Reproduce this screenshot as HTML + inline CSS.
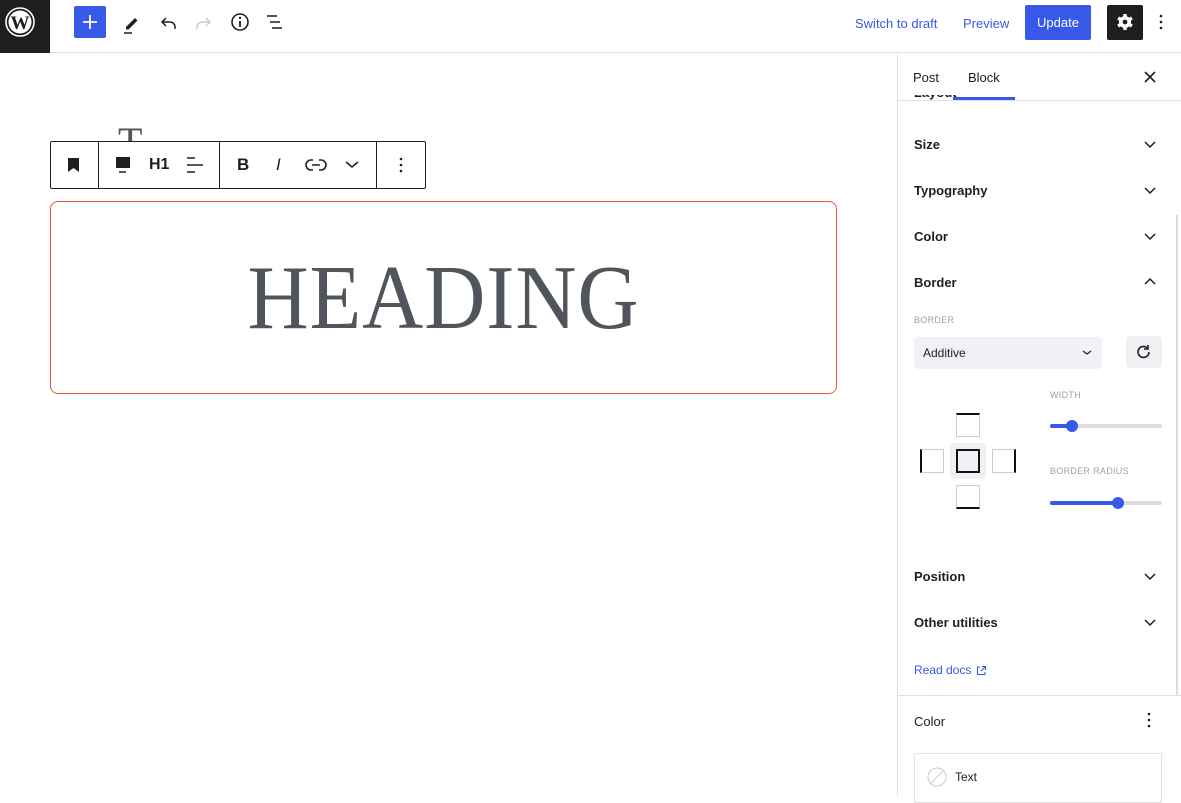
<!DOCTYPE html>
<html><head><meta charset="utf-8"><style>
*{box-sizing:border-box;margin:0;padding:0}
body{width:1181px;height:796px;overflow:hidden;background:#fff;font-family:"Liberation Sans",sans-serif;color:#1e1e1e;position:relative}
.abs{position:absolute}
.top{left:0;top:0;width:1181px;height:53px;border-bottom:1px solid #e0e0e0}
.side{left:897px;top:53px;width:284px;height:743px;border-left:1px solid #e0e0e0}
.row{position:absolute;left:914px;font-size:13px;font-weight:bold;color:#1e1e1e}
.chev{position:absolute;left:1143px;width:14px;height:10px}
.lbl{position:absolute;font-size:9px;color:#a0a0a8;letter-spacing:.3px}
</style></head><body>
<div class="abs top"></div>
<div class="abs" style="left:0;top:0;width:50px;height:53px;background:#1e1e1e"></div>
<svg class="abs" style="left:5px;top:7px" width="30" height="30" viewBox="0 0 30 30"><circle cx="15" cy="15" r="14" fill="none" stroke="#fff" stroke-width="1.6"/><circle cx="15" cy="15" r="11.5" fill="#fff"/><text x="15" y="22" text-anchor="middle" font-family="Liberation Serif" font-weight="bold" font-size="19" fill="#1e1e1e">W</text></svg>
<div class="abs" style="left:74px;top:6px;width:32px;height:32px;background:#3858e9;border-radius:2px"></div>
<svg class="abs" style="left:74px;top:6px" width="32" height="32"><path d="M16 9v14M9 16h14" stroke="#fff" stroke-width="1.8"/></svg>
<svg class="abs" style="left:120px;top:11px" width="24" height="24"><path d="M6 16l9-9 2.5 2.5-9 9H6z" fill="#1e1e1e"/><path d="M4 22h8" stroke="#1e1e1e" stroke-width="1.5"/></svg>
<svg class="abs" style="left:156px;top:11px" width="24" height="24"><path d="M19 18v-2a5 5 0 0 0-5-5H6M10 7l-4 4 4 4" fill="none" stroke="#1e1e1e" stroke-width="1.5"/></svg>
<svg class="abs" style="left:192px;top:11px" width="24" height="24"><path d="M5 18v-2a5 5 0 0 1 5-5h8M14 7l4 4-4 4" fill="none" stroke="#ccc" stroke-width="1.5"/></svg>
<svg class="abs" style="left:228px;top:11px" width="24" height="24"><circle cx="12" cy="11" r="8" fill="none" stroke="#1e1e1e" stroke-width="1.6"/><path d="M12 10v6" stroke="#1e1e1e" stroke-width="1.8"/><circle cx="12" cy="7" r="1.2" fill="#1e1e1e"/></svg>
<svg class="abs" style="left:264px;top:11px" width="24" height="24"><path d="M3 5h10M6 11h10M8 17h10" stroke="#1e1e1e" stroke-width="1.5"/></svg>
<div class="abs" style="left:855px;top:16px;font-size:13px;color:#3858e9">Switch to draft</div>
<div class="abs" style="left:963px;top:16px;font-size:13px;color:#3858e9">Preview</div>
<div class="abs" style="left:1025px;top:5px;width:66px;height:35px;background:#3858e9;border-radius:2px;color:#fff;font-size:13px;text-align:center;line-height:35px">Update</div>
<div class="abs" style="left:1107px;top:5px;width:36px;height:35px;background:#1e1e1e;border-radius:2px"></div>
<svg class="abs" style="left:1115px;top:12px" width="20" height="20" viewBox="0 0 20 20"><g fill="#fff"><circle cx="10" cy="10" r="6"/><rect x="8.3" y="2" width="3.4" height="16"/><rect x="8.3" y="2" width="3.4" height="16" transform="rotate(60 10 10)"/><rect x="8.3" y="2" width="3.4" height="16" transform="rotate(120 10 10)"/></g><circle cx="10" cy="10" r="2.4" fill="#1e1e1e"/></svg>
<svg class="abs" style="left:1154px;top:12px" width="14" height="20"><g fill="#1e1e1e"><circle cx="7" cy="4" r="1.3"/><circle cx="7" cy="10" r="1.3"/><circle cx="7" cy="16" r="1.3"/></g></svg>

<div class="abs" style="left:118px;top:122px;font-family:'Liberation Serif',serif;font-size:40px;color:#555;line-height:1">T</div>
<div class="abs" style="left:50px;top:141px;width:376px;height:48px;border:1px solid #1e1e1e;border-radius:2px;background:#fff"></div>
<div class="abs" style="left:98px;top:142px;width:1px;height:46px;background:#1e1e1e"></div>
<div class="abs" style="left:219px;top:142px;width:1px;height:46px;background:#1e1e1e"></div>
<div class="abs" style="left:376px;top:142px;width:1px;height:46px;background:#1e1e1e"></div>
<svg class="abs" style="left:66px;top:157px" width="16" height="16"><path d="M2 1h11v14l-5.5-4L2 15z" fill="#1e1e1e"/></svg>
<svg class="abs" style="left:114px;top:155px" width="18" height="20"><rect x="2" y="2" width="14" height="11" fill="#1e1e1e"/><path d="M5 17h7" stroke="#1e1e1e" stroke-width="1.5"/></svg>
<div class="abs" style="left:149px;top:156px;font-size:16px;font-weight:bold">H1</div>
<svg class="abs" style="left:186px;top:155px" width="20" height="20"><path d="M1 3h8M1 10h16M1 17h8" stroke="#1e1e1e" stroke-width="1.5"/></svg>
<div class="abs" style="left:237px;top:155px;font-size:17px;font-weight:bold">B</div>
<div class="abs" style="left:276px;top:155px;font-size:17px;font-style:italic">I</div>
<svg class="abs" style="left:305px;top:157px" width="22" height="16"><path d="M8 3H6a5 5 0 0 0 0 10h2M14 3h2a5 5 0 0 1 0 10h-2M7 8h8" fill="none" stroke="#1e1e1e" stroke-width="1.6"/></svg>
<svg class="abs" style="left:344px;top:160px" width="16" height="10"><path d="M2 2l6 5 6-5" fill="none" stroke="#1e1e1e" stroke-width="1.6"/></svg>
<svg class="abs" style="left:395px;top:155px" width="12" height="20"><g fill="#1e1e1e"><circle cx="6" cy="4" r="1.3"/><circle cx="6" cy="10" r="1.3"/><circle cx="6" cy="16" r="1.3"/></g></svg>

<div class="abs" style="left:50px;top:201px;width:787px;height:193px;border:1px solid #e9553e;border-radius:8px"></div>
<div class="abs" style="left:50px;top:252px;width:787px;text-align:center;font-family:'Liberation Serif',serif;font-size:91px;line-height:1;color:#50555c;transform:scaleX(.93);letter-spacing:1px">HEADING</div>

<div class="abs side"></div>
<div class="abs" style="left:898px;top:95px;width:270px;height:5px;overflow:hidden"><div style="position:absolute;left:16px;top:-10px;font-size:13px;font-weight:bold">Layout</div></div>
<div class="abs" style="left:913px;top:70px;font-size:13px">Post</div>
<div class="abs" style="left:968px;top:70px;font-size:13px">Block</div>
<div class="abs" style="left:953px;top:97px;width:62px;height:4px;background:#3858e9"></div>
<div class="abs" style="left:898px;top:100px;width:283px;height:1px;background:#e0e0e0"></div>
<svg class="abs" style="left:1143px;top:70px" width="14" height="14"><path d="M2 2l10 10M12 2L2 12" stroke="#1e1e1e" stroke-width="1.6"/></svg>
<div class="abs" style="left:1176px;top:215px;width:2px;height:480px;background:#ddd"></div>

<div class="row" style="top:137px">Size</div>
<div class="row" style="top:183px">Typography</div>
<div class="row" style="top:229px">Color</div>
<div class="row" style="top:275px">Border</div>
<div class="row" style="top:569px">Position</div>
<div class="row" style="top:615px">Other utilities</div>
<svg class="chev" style="top:140px"><path d="M2 2l5 5 5-5" fill="none" stroke="#1e1e1e" stroke-width="1.5"/></svg>
<svg class="chev" style="top:186px"><path d="M2 2l5 5 5-5" fill="none" stroke="#1e1e1e" stroke-width="1.5"/></svg>
<svg class="chev" style="top:232px"><path d="M2 2l5 5 5-5" fill="none" stroke="#1e1e1e" stroke-width="1.5"/></svg>
<svg class="chev" style="top:277px"><path d="M2 7l5-5 5 5" fill="none" stroke="#1e1e1e" stroke-width="1.5"/></svg>
<svg class="chev" style="top:572px"><path d="M2 2l5 5 5-5" fill="none" stroke="#1e1e1e" stroke-width="1.5"/></svg>
<svg class="chev" style="top:618px"><path d="M2 2l5 5 5-5" fill="none" stroke="#1e1e1e" stroke-width="1.5"/></svg>

<div class="lbl" style="left:914px;top:315px">BORDER</div>
<div class="abs" style="left:914px;top:337px;width:188px;height:32px;background:#f0f1f4;border-radius:4px"></div>
<div class="abs" style="left:923px;top:346px;font-size:12px">Additive</div>
<svg class="abs" style="left:1082px;top:349px" width="10" height="8"><path d="M1 2l4 3 4-3" fill="none" stroke="#1e1e1e" stroke-width="1.2"/></svg>
<div class="abs" style="left:1126px;top:336px;width:36px;height:32px;background:#f0f1f4;border-radius:4px"></div>
<svg class="abs" style="left:1135px;top:343px" width="18" height="18"><path d="M14 9a5.5 5.5 0 1 1-2-4.3" fill="none" stroke="#1e1e1e" stroke-width="1.6"/><path d="M13 2v4h-4" fill="none" stroke="#1e1e1e" stroke-width="1.6"/></svg>

<div class="abs" style="left:956px;top:413px;width:24px;height:24px;border:1px solid #c8ccd8;border-top:2px solid #111"></div>
<div class="abs" style="left:950px;top:443px;width:36px;height:36px;background:#f0f1f4;border-radius:4px"></div>
<div class="abs" style="left:956px;top:449px;width:24px;height:24px;border:2px solid #111"></div>
<div class="abs" style="left:920px;top:449px;width:24px;height:24px;border:1px solid #c8ccd8;border-left:2px solid #111"></div>
<div class="abs" style="left:992px;top:449px;width:24px;height:24px;border:1px solid #c8ccd8;border-right:2px solid #111"></div>
<div class="abs" style="left:956px;top:485px;width:24px;height:24px;border:1px solid #c8ccd8;border-bottom:2px solid #111"></div>

<div class="lbl" style="left:1050px;top:390px">WIDTH</div>
<div class="abs" style="left:1050px;top:424px;width:112px;height:4px;background:#dcdcde;border-radius:2px"></div>
<div class="abs" style="left:1050px;top:424px;width:22px;height:4px;background:#3858e9;border-radius:2px"></div>
<div class="abs" style="left:1066px;top:420px;width:12px;height:12px;background:#3858e9;border-radius:50%"></div>
<div class="lbl" style="left:1050px;top:466px">BORDER RADIUS</div>
<div class="abs" style="left:1050px;top:501px;width:112px;height:4px;background:#dcdcde;border-radius:2px"></div>
<div class="abs" style="left:1050px;top:501px;width:68px;height:4px;background:#3858e9;border-radius:2px"></div>
<div class="abs" style="left:1112px;top:497px;width:12px;height:12px;background:#3858e9;border-radius:50%"></div>

<div class="abs" style="left:914px;top:663px;font-size:12px;color:#3858e9">Read docs</div>
<svg class="abs" style="left:976px;top:665px" width="11" height="11"><path d="M4 2H1.5v7.5H9V7M6 1.5h3.5V5M9.5 1.5L5 6" fill="none" stroke="#3858e9" stroke-width="1.1"/></svg>
<div class="abs" style="left:898px;top:695px;width:283px;height:1px;background:#e0e0e0"></div>
<div class="abs" style="left:914px;top:714px;font-size:13px">Color</div>
<svg class="abs" style="left:1143px;top:711px" width="12" height="18"><g fill="#1e1e1e"><circle cx="6" cy="3" r="1.3"/><circle cx="6" cy="9" r="1.3"/><circle cx="6" cy="15" r="1.3"/></g></svg>
<div class="abs" style="left:914px;top:753px;width:248px;height:50px;border:1px solid #e0e0e0;border-radius:2px"></div>
<svg class="abs" style="left:927px;top:767px" width="20" height="20"><circle cx="10" cy="10" r="9" fill="none" stroke="#ccc" stroke-width="1"/><path d="M4 16L16 4" stroke="#ccc"/></svg>
<div class="abs" style="left:955px;top:770px;font-size:12px">Text</div>
</body></html>
